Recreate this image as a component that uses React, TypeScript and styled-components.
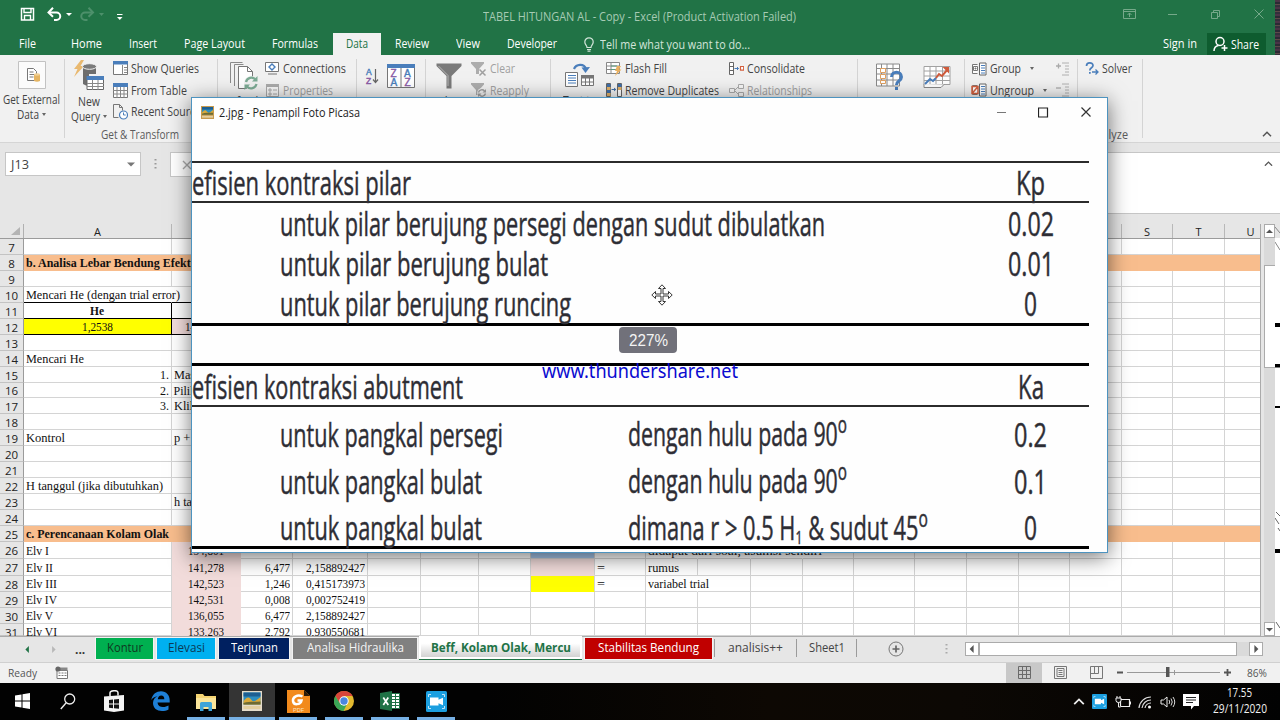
import React, { useLayoutEffect, useRef, useState } from "react";
import styled, { createGlobalStyle } from "styled-components";

const UI = `"Open Sans", "Noto Sans", sans-serif`;
const SERIF = `"Liberation Serif", "Times New Roman", serif`;

const Global = createGlobalStyle`
  html, body { margin: 0; padding: 0; }
  body { width: 1280px; height: 720px; overflow: hidden; background: #000; font-family: ${UI}; font-size: 12px; color: #444; }
  * { box-sizing: border-box; }
  svg { display: block; flex: none; }
`;

/* ---------- text squeezed to a column width ---------- */
const FitBox = styled.span<{ $w: number }>`
  display: inline-block;
  flex: none;
  width: ${(p) => p.$w}px;
  white-space: nowrap;
  text-align: left;
`;
const FitInner = styled.span`
  display: inline-block;
  white-space: nowrap;
  transform-origin: 0 50%;
`;
function Fit({ w, children }: { w: number; children: React.ReactNode }) {
  const ref = useRef<HTMLSpanElement>(null);
  const [k, setK] = useState(1);
  useLayoutEffect(() => {
    if (ref.current) {
      const natural = parseFloat(getComputedStyle(ref.current).width);
      if (natural > 0) setK(w / natural);
    }
  }, [w]);
  return (
    <FitBox $w={w}>
      <FitInner ref={ref} style={{ transform: `scaleX(${k})` }}>{children}</FitInner>
    </FitBox>
  );
}

/* ---------- shell ---------- */
const Desktop = styled.div`
  position: relative;
  width: 1280px;
  height: 720px;
  overflow: hidden;
  display: flex;
  flex-direction: column;
  background: #e6e6e6;
`;
const Head = styled.header`
  display: flex;
  height: 55px;
  flex: none;
`;
const Green = styled.div`
  width: 1275px;
  background: #217346;
  display: flex;
  flex-direction: column;
`;
const EdgeNoise = styled.div`
  width: 5px;
  background: repeating-linear-gradient(180deg, #4a3446 0 2px, #2b2a35 2px 4px, #5d4a48 4px 5px, #33303c 5px 7px);
`;
const TitleBar = styled.div`
  display: flex;
  align-items: center;
  height: 33px;
`;
const QuickAccess = styled.div`
  display: flex;
  align-items: center;
  width: 483px;
  height: 33px;
  padding: 0 0 5px 20px;
`;
const DocTitle = styled.div`
  color: #a6cbb4;
  font-size: 12px;
`;
const Controls = styled.div`
  margin-left: auto;
  padding: 0 9px 5px 0;
  height: 33px;
  display: flex;
  align-items: center;
`;
const TabStrip = styled.nav`
  display: flex;
  height: 22px;
  align-items: center;
  color: #fff;
`;
const RTab = styled.span<{ $ml: number }>`
  margin-left: ${(p) => p.$ml}px;
  line-height: 22px;
  display: flex;
`;
const ActiveTab = styled.span`
  margin-left: 15px;
  width: 48px;
  height: 22px;
  line-height: 22px;
  display: flex;
  justify-content: center;
  background: #f1f1f1;
  color: #217346;
`;
const TellMe = styled.span`
  margin-left: 27px;
  display: flex;
  gap: 6px;
  align-items: center;
  color: #d3e5da;
`;
const Share = styled.span`
  margin-left: 10px;
  width: 59px;
  height: 22px;
  background: #0e5c2f;
  display: flex;
  align-items: center;
  padding-left: 6px;
  gap: 3px;
`;

/* ---------- ribbon ---------- */
const Ribbon = styled.section`
  flex: none;
  height: 88px;
  background: #f1f1f1;
  border-bottom: 1px solid #d5d5d5;
  display: flex;
`;
const Group = styled.div<{ $w: number }>`
  width: ${(p) => p.$w}px;
  flex: none;
  display: flex;
  flex-direction: column;
`;
const GroupBody = styled.div<{ $pl: number }>`
  height: 72px;
  padding-left: ${(p) => p.$pl}px;
  display: flex;
`;
const GroupLabel = styled.div<{ $pl?: number }>`
  height: 14px;
  line-height: 15px;
  color: #5c5c5c;
  padding-left: ${(p) => p.$pl ?? 0}px;
`;
const Sep = styled.div`
  width: 1px;
  height: 79px;
  margin-top: 4px;
  flex: none;
  background: #d4d4d4;
`;
const BigButton = styled.div<{ $w: number; $ml?: number }>`
  width: ${(p) => p.$w}px;
  margin-left: ${(p) => p.$ml ?? 0}px;
  flex: none;
  display: flex;
  flex-direction: column;
  align-items: center;
  padding-top: 3px;
`;
const IconSlot = styled.div<{ $h?: number }>`
  height: ${(p) => p.$h ?? 36}px;
  display: flex;
  align-items: center;
  justify-content: center;
`;
const BigLine = styled.div`
  height: 15px;
  line-height: 15px;
  display: flex;
  align-items: center;
  gap: 3px;
`;
const BtnColumn = styled.div<{ $ml: number }>`
  margin-left: ${(p) => p.$ml}px;
  flex: none;
  padding-top: 3px;
  display: flex;
  flex-direction: column;
`;
const SmallButton = styled.div<{ $dim?: boolean }>`
  height: 21.6px;
  line-height: 21px;
  display: flex;
  align-items: center;
  gap: 3px;
  color: ${(p) => (p.$dim ? "#a0a0a0" : "#444")};
`;
const ArrowGap = styled.span<{ $w: number }>`
  width: ${(p) => p.$w}px;
`;
const Caret = styled.span`
  width: 0;
  height: 0;
  border: 2.5px solid transparent;
  border-top: 3px solid #666;
  border-bottom: 0;
`;
const RibbonEnd = styled.div`
  margin-left: auto;
  padding: 76px 8px 0 0;
`;

/* ---------- formula bar ---------- */
const FormulaBar = styled.section`
  flex: none;
  height: 81px;
  padding-top: 9px;
  display: flex;
`;
const NameBox = styled.div`
  margin-left: 5px;
  width: 136px;
  height: 24px;
  background: #fff;
  border: 1px solid #c6c6c6;
  display: flex;
  align-items: center;
  justify-content: space-between;
  padding: 0 5px 0 5px;
`;
const Dots = styled.div`
  width: 29px;
  height: 24px;
  display: flex;
  align-items: center;
  justify-content: center;
`;
const FxButtons = styled.div`
  width: 80px;
  height: 25px;
  background: #fff;
  border: 1px solid #c6c6c6;
  display: flex;
  align-items: center;
  padding-left: 11px;
`;
const FormulaInput = styled.div`
  flex: 1;
  margin-left: 8px;
  height: 62px;
  background: #fff;
  border: 1px solid #c6c6c6;
  border-right: 0;
  display: flex;
  justify-content: flex-end;
  padding: 8px 7px 0 0;
`;

/* ---------- sheet ---------- */
const SheetArea = styled.section`
  flex: none;
  height: 412px;
  display: flex;
`;
const Grid = styled.div`
  width: 1261px;
  height: 412px;
  overflow: hidden;
  border-right: 1px solid #ababab;
  background: #fff;
`;
const HeadRow = styled.div`
  display: flex;
  height: 15px;
  background: #e6e6e6;
  border-bottom: 1px solid #9b9b9b;
`;
const Corner = styled.div`
  width: 24px;
  display: flex;
  align-items: flex-end;
  justify-content: flex-end;
  padding: 0 3px 3px 0;
  border-right: 1px solid #b0b0b0;
  flex: none;
`;
const ColHead = styled.div<{ $w: number }>`
  width: ${(p) => p.$w}px;
  flex: none;
  border-right: 1px solid #b8b8b8;
  line-height: 15px;
  text-align: center;
  font-size: 11px;
  color: #222;
`;
const GridRow = styled.div<{ $h: number }>`
  display: flex;
  height: ${(p) => p.$h}px;
`;
const RowHead = styled.div<{ $h: number }>`
  width: 24px;
  flex: none;
  background: #e6e6e6;
  border-right: 1px solid #9b9b9b;
  border-bottom: 1px solid #c3c3c3;
  line-height: ${(p) => p.$h + 1}px;
  text-align: center;
  font-size: 11.5px;
  color: #222;
`;
const CellBox = styled.div<{ $w: number; $h: number; $bg?: string; $b?: string; $r?: string; $al?: string; $bold?: boolean }>`
  width: ${(p) => p.$w}px;
  flex: none;
  background: ${(p) => p.$bg ?? "transparent"};
  border-right: 1px solid ${(p) => p.$r ?? "#d4d4d4"};
  border-bottom: 1px solid ${(p) => p.$b ?? "#d4d4d4"};
  display: flex;
  justify-content: ${(p) => p.$al ?? "flex-start"};
  padding: 0 2px 0 1.5px;
  font-family: ${SERIF};
  font-size: 12px;
  font-weight: ${(p) => (p.$bold ? 700 : 400)};
  line-height: ${(p) => p.$h + 1}px;
  color: #111;
`;
const VScroll = styled.div`
  width: 14px;
  display: flex;
  flex-direction: column;
  background: #dadada;
  border-left: 3px solid #e6e6e6;
`;
const ScrollBtn = styled.div<{ $w: number; $h: number }>`
  width: ${(p) => p.$w}px;
  height: ${(p) => p.$h}px;
  flex: none;
  background: #fff;
  border: 1px solid #ababab;
  display: flex;
  align-items: center;
  justify-content: center;
`;
const VThumb = styled.div`
  margin-top: 27px;
  height: 103px;
  background: #fff;
  border: 1px solid #ababab;
  border-right: 0;
`;
const Push = styled.div`
  flex: 1;
`;
const EdgeStrip = styled.div`
  width: 5px;
  background: #fff;
`;

/* ---------- sheet tabs ---------- */
const SheetTabs = styled.section`
  flex: none;
  height: 26px;
  border-top: 1px solid #ababab;
  background: #e6e6e6;
  display: flex;
`;
const NavBox = styled.div`
  width: 96px;
  height: 24px;
  display: flex;
  align-items: center;
  padding-left: 24px;
`;
const NavDots = styled.span`
  margin-left: 18px;
  color: #333;
  font-weight: 700;
`;
const STab = styled.div<{ $w: number; $bg?: string; $c?: string; $mr: number }>`
  width: ${(p) => p.$w}px;
  height: 21px;
  line-height: 19px;
  margin: 1px ${(p) => p.$mr}px 0 0;
  background: ${(p) => p.$bg ?? "transparent"};
  color: ${(p) => p.$c ?? "#444"};
  display: flex;
  justify-content: center;
  flex: none;
  outline: ${(p) => (p.$bg ? "1px solid #f3f3f3" : "none")};
`;
const ActiveSheet = styled.div`
  width: 163px;
  height: 23px;
  line-height: 24px;
  margin: -1px 3px 0 0;
  flex: none;
  background: linear-gradient(#fff 0 35%, #d2d2d2);
  border: 2px solid #fff;
  border-top: 0;
  box-shadow: 0 1px 0 #217346;
  color: #217346;
  font-weight: 700;
  display: flex;
  justify-content: center;
`;
const TabRule = styled.div`
  width: 1px;
  height: 18px;
  margin-top: 2px;
  background: #9b9b9b;
  flex: none;
`;
const TabSlot = styled.div<{ $w: number }>`
  width: ${(p) => p.$w}px;
  height: 23px;
  flex: none;
  display: flex;
  align-items: center;
  justify-content: center;
`;
const HScroll = styled.div`
  margin: 5px 0 0 6px;
  width: 298px;
  height: 14px;
  display: flex;
  background: #dadada;
`;
const HThumb = styled.div`
  width: 258px;
  background: #fff;
  border: 1px solid #ababab;
  margin-right: 12px;
`;

/* ---------- status bar ---------- */
const Status = styled.section`
  flex: none;
  height: 21px;
  background: #f1f1f1;
  border-top: 1px solid #d0d0d0;
  display: flex;
  align-items: center;
  padding: 0 1px 2px 8px;
  font-size: 11px;
  color: #555;
`;
const StatusIcon = styled.div`
  margin-left: 18px;
`;
const ViewBtn = styled.div<{ $on?: boolean; $ml?: string }>`
  margin-left: ${(p) => p.$ml ?? "0"};
  width: 36px;
  height: 20px;
  margin-bottom: -2px;
  padding-bottom: 1px;
  display: flex;
  align-items: center;
  justify-content: center;
  background: ${(p) => (p.$on ? "#c8c8c8" : "transparent")};
`;
const ZoomCtl = styled.div`
  display: flex;
  align-items: center;
  width: 165px;
  padding-left: 2px;
  gap: 15px;
`;

/* ---------- taskbar ---------- */
const Taskbar = styled.footer`
  flex: none;
  height: 37px;
  background: linear-gradient(90deg, #020202 0 38%, #0d0803 60%, #0c0804 75%, #020202);
  display: flex;
`;
const TaskList = styled.div`
  display: flex;
  margin-left: -1px;
`;
const TaskItem = styled.div<{ $active?: boolean; $open?: boolean }>`
  width: ${(p) => (p.$active ? 46 : 38)}px;
  margin: 0 ${(p) => (p.$active ? 0 : 4)}px;
  height: 37px;
  padding-top: 2px;
  display: flex;
  align-items: center;
  justify-content: center;
  background: ${(p) => (p.$active ? "#343434" : "transparent")};
  border-bottom: 3px solid ${(p) => (p.$open || p.$active ? "#76b0e4" : "transparent")};
`;
const Tray = styled.div`
  margin-left: auto;
  display: flex;
  align-items: center;
  gap: 7.5px;
`;
const Clock = styled.div`
  width: 81px;
  margin-left: -7.5px;
  color: #f2f2f2;
  font-size: 12px;
  line-height: 16px;
  display: flex;
  flex-direction: column;
  align-items: center;
  padding-bottom: 2px;
`;

/* ---------- photo viewer window ---------- */
const Viewer = styled.div`
  position: absolute;
  left: 191px;
  top: 97px;
  width: 917px;
  height: 456px;
  background: #fefefe;
  border: 1px solid #4d93bf;
  box-shadow: 0 4px 20px rgba(0, 0, 0, 0.55);
  display: flex;
  flex-direction: column;
  overflow: hidden;
`;
const ViewerBar = styled.div`
  height: 29px;
  flex: none;
  display: flex;
  align-items: center;
  padding: 0 15px 1px 9px;
  gap: 5px;
  color: #222;
`;
const ViewerControls = styled.div`
  margin-left: auto;
  display: flex;
  align-items: center;
  gap: 31px;
`;
const Doc = styled.div`
  width: 897px;
  padding-top: 34px;
  font-size: 32px;
  color: #2c2c33;
  -webkit-text-stroke: 0.5px #3a3a42;
  display: flex;
  flex-direction: column;
`;
const Rule = styled.div<{ $h: number }>`
  height: ${(p) => p.$h}px;
  flex: none;
  background: ${(p) => (p.$h > 2 ? "#000" : "#2b2b2b")};
`;
const DocRow = styled.div<{ $h: number }>`
  height: ${(p) => p.$h}px;
  line-height: ${(p) => p.$h + 2.5}px;
  flex: none;
  display: grid;
  grid-template-columns: 88px 348px 344px 117px;
`;
const DocHead = styled.div`
  grid-column: 1 / 4;
`;
const DocCell = styled.div<{ $col: string; $up?: boolean }>`
  grid-column: ${(p) => p.$col};
  margin-top: ${(p) => (p.$up ? -1 : 0)}px;
`;
const DocValue = styled.div`
  grid-column: 4;
  text-align: center;
`;
const DocBlock = styled.div<{ $h: number; $pt?: number }>`
  height: ${(p) => p.$h}px;
  padding-top: ${(p) => p.$pt ?? 0}px;
  flex: none;
`;
const Sup = styled.span`
  display: inline-block;
  font-size: 23px;
  line-height: 20px;
  transform: translateY(-13px);
`;
const Sub = styled.span`
  display: inline-block;
  font-size: 18px;
  line-height: 20px;
  transform: translateY(4px);
`;
const ZoomBadge = styled.div`
  position: absolute;
  left: 619px;
  top: 327px;
  width: 58px;
  height: 26px;
  border-radius: 4px;
  background: #71717a;
  color: #f4f4f4;
  font: 16px/27px "Liberation Sans", Arial, sans-serif;
  text-align: center;
`;
const Watermark = styled.div`
  position: absolute;
  left: 542px;
  top: 358px;
  font: 19px/26px "Noto Sans", "Open Sans", sans-serif;
  color: #0a0ad0;
`;
const Pointer = styled.div`
  position: absolute;
  left: 651px;
  top: 284px;
`;

/* ---------- small drawings ---------- */
const Tri = ({ d, c = "#555", s = 6 }: { d: "u" | "d" | "l" | "r"; c?: string; s?: number }) => {
  const p = { u: "0,7 10,7 5,2", d: "0,3 10,3 5,8", l: "7,0 7,10 2,5", r: "3,0 3,10 8,5" }[d];
  return <svg width={s} height={s} viewBox="0 0 10 10"><polygon points={p} fill={c} /></svg>;
};
const ChevronUp = ({ c = "#555", w = 10 }: { c?: string; w?: number }) => (
  <svg width={w} height={w * 0.6} viewBox="0 0 10 6"><path d="M1 5.2 5 1.2l4 4" fill="none" stroke={c} strokeWidth="1.5" /></svg>
);
const TableIcon = () => (
  <svg width="15" height="15" viewBox="0 0 15 15">
    <path d="M.5.5h14v14H.5z" fill="#fff" stroke="#777" />
    <path d="M0 0h15v4H0z" fill="#4a7ebb" />
    <path d="M0 7.5h15M0 11h15M4 4v11M7.5 4v11M11 4v11" stroke="#888" />
  </svg>
);
const PaneIcon = () => (
  <svg width="15" height="15" viewBox="0 0 15 15">
    <path d="M.5.5h14v13H.5z" fill="#fff" stroke="#777" />
    <path d="M0 0h15v3.5H0z" fill="#4a7ebb" />
    <path d="M9.5 4v9.5M11 6.5h3M11 9h3M11 11.500h3" stroke="#888" />
  </svg>
);
const RecentIcon = () => (
  <svg width="15" height="16" viewBox="0 0 15 16">
    <path d="M.5 13.500V.5h6l3 3v3M.5 13.500h5" fill="none" stroke="#777" />
    <path d="M6.500.5v3h3" fill="none" stroke="#777" />
    <circle cx="10.500" cy="11" r="4" fill="#fff" stroke="#4a7ebb" strokeWidth="1.200" />
    <path d="M10.500 8.500V11h2.200" fill="none" stroke="#4a7ebb" />
  </svg>
);
const ExternalIcon = () => (
  <svg width="28" height="28" viewBox="0 0 28 28">
    <path d="M.5.5h27v27H.5z" fill="#fbfbfb" stroke="#c2c2c2" />
    <path d="M9.500 7.500h6l3 3v9h-9z" fill="#fff" stroke="#777" />
    <path d="M11.500 11h4M11.500 13.500h5M11.500 16h4" stroke="#777" />
    <path d="M16 13.500h6v6.500q-3 1.600-6 0z" fill="#e5b461" />
    <ellipse cx="19" cy="13.500" rx="3" ry="1.300" fill="#f1cf92" />
  </svg>
);
const NewQueryIcon = () => (
  <svg width="33" height="32" viewBox="0 0 33 32">
    <path d="M8 0h3L7.500 6H11L1 17l3.500-8H1z" fill="#e9b970" />
    <path d="M10 7v17q3 2 6 2V14h7V7z" fill="#6d6d6d" />
    <ellipse cx="16.500" cy="6.500" rx="7" ry="2.800" fill="#7b7b7b" stroke="#f1f1f1" />
    <path d="M14 16.500h16.500v13H14z" fill="#fff" stroke="#666" />
    <path d="M13.500 16h17.500v4H13.500z" fill="#4a7ebb" />
    <path d="M14 23.500h17M14 26.500h17M19.500 20v10M25 20v10" stroke="#888" />
  </svg>
);
const RefreshIcon = () => (
  <svg width="29" height="31" viewBox="0 0 29 31">
    <path d="M1.500 22V1.500h12M5.500 25V3.500h9" fill="none" stroke="#8a8a8a" />
    <path d="M9.500 27.500v-22h9l5 5v17z" fill="#fff" stroke="#777" />
    <path d="M18.500 5.500v5h5" fill="none" stroke="#777" />
    <circle cx="22" cy="22" r="7" fill="#f1f1f1" />
    <path d="M17 21a5.500 5.500 0 0 1 9.500-2.500M27.500 23a5.500 5.500 0 0 1-9.500 2.500" fill="none" stroke="#7cab94" strokeWidth="2.300" />
    <path d="M28.500 15v5.500H23zM15.500 29v-5.500H21z" fill="#7cab94" />
  </svg>
);
const ConnIcon = () => (
  <svg width="15" height="13" viewBox="0 0 15 13">
    <path d="M.5.5h13v9H.5z" fill="#fff" stroke="#777" />
    <path d="M7 2 10 5 7 8 4 5z" fill="none" stroke="#4a7ebb" strokeWidth="1.400" />
    <path d="M3 12h9" stroke="#777" />
  </svg>
);
const PropIcon = () => (
  <svg width="15" height="15" viewBox="0 0 15 15">
    <path d="M1.500 1.500h12v12h-12z" fill="#f6f6f6" stroke="#aaa" />
    <path d="M1 1h13v3H1z" fill="#aaa" />
    <path d="M4 6h2v2H4zM4 10h2v2H4z" fill="none" stroke="#aaa" />
    <path d="M8 7h4M8 11h4" stroke="#aaa" />
  </svg>
);
const SvgLetter = styled.text`
  font-family: "Liberation Sans", Arial, sans-serif;
  font-weight: 400;
  stroke-width: 0.4px;
`;
const SortAz = () => (
  <svg width="14" height="18" viewBox="0 0 14 18">
    <SvgLetter x="1" y="8" fontSize="8.500" fill="#4a7ebb" stroke="#4a7ebb">A</SvgLetter>
    <SvgLetter x="1" y="16.500" fontSize="8.500" fill="#8a5aa5" stroke="#8a5aa5">Z</SvgLetter>
    <path d="M10.500 2v13M8 12.500l2.500 3 2.500-3" fill="none" stroke="#666" strokeWidth="1.200" />
  </svg>
);
const SortBig = () => (
  <svg width="28" height="24" viewBox="0 0 28 24">
    <path d="M.5.5h27v23H.5z" fill="#fff" stroke="#777" />
    <path d="M0 0h28v4H0z" fill="#4a7ebb" />
    <path d="M14 4v20" stroke="#777" />
    <SvgLetter x="3.500" y="13" fontSize="10" fill="#8a5aa5" stroke="#8a5aa5">Z</SvgLetter>
    <SvgLetter x="3.500" y="22.300" fontSize="10" fill="#4a7ebb" stroke="#4a7ebb">A</SvgLetter>
    <SvgLetter x="17" y="13" fontSize="10" fill="#4a7ebb" stroke="#4a7ebb">A</SvgLetter>
    <SvgLetter x="17.500" y="22.300" fontSize="10" fill="#8a5aa5" stroke="#8a5aa5">Z</SvgLetter>
  </svg>
);
const FilterBig = () => (
  <svg width="26" height="26" viewBox="0 0 26 26">
    <path d="M.5.500h25v2.500l-10 10v12.500h-5V13L.5 3z" fill="#7a7a7a" />
    <path d="M2.500 3 12 12.500V23" fill="none" stroke="#b5b5b5" />
  </svg>
);
const FilterSmall = ({ kind }: { kind: "x" | "r" }) => (
  <svg width="16" height="16" viewBox="0 0 16 16">
    <path d="M0 1h13v1.500L8 8v5H5V8L0 2.500z" fill="#adadad" />
    {kind === "x" ? (
      <path d="M8.500 8.500 14.500 14.500M14.500 8.500 8.500 14.500" stroke="#a0a0a0" strokeWidth="1.500" />
    ) : (
      <g>
        <circle cx="11" cy="11" r="4.800" fill="#f1f1f1" />
        <path d="M7.500 10.500a3.500 3.500 0 0 1 6-1.500M14.500 11.500a3.500 3.500 0 0 1-6 1.500" fill="none" stroke="#a0a0a0" strokeWidth="1.400" />
        <path d="M15 7v3.500h-3.500zM7 15v-3.500h3.500z" fill="#a0a0a0" />
      </g>
    )}
  </svg>
);
const TextColsIcon = () => (
  <svg width="30" height="25" viewBox="0 0 30 25">
    <path d="M1.500 9.500h12v14h-12z" fill="#fff" stroke="#777" />
    <path d="M4 12.500h8M4 15h8M4 17.500h8M4 20h8" stroke="#4a7ebb" />
    <path d="M10 6C12 1 20 0 22 6" fill="none" stroke="#4a7ebb" strokeWidth="2.200" />
    <path d="M17.500 4.500 26 4l-4.500 6z" fill="#4a7ebb" />
    <path d="M17.500 12.500h12v10h-12z" fill="#fff" stroke="#777" />
    <path d="M17 12h13v3.500H17z" fill="#777" />
    <path d="M21.500 15v8M25.500 15v8M17 19h13" stroke="#777" />
  </svg>
);
const FlashIcon = () => (
  <svg width="16" height="15" viewBox="0 0 16 15">
    <path d="M.5 1.500h13v11H.5zM.5 5h13M.5 8.500h13M5 1.500v11" fill="#fff" stroke="#888" />
    <path d="M5 5h6M5 8.500h4" stroke="#5b9b7c" />
    <path d="M11 5h4l-2 3.500h2.500L9 15l2-5H9z" fill="#e9b060" />
  </svg>
);
const DupIcon = () => (
  <svg width="16" height="15" viewBox="0 0 16 15">
    <path d="M.5.5h4v13h-4zM11.500.500h4v13h-4z" fill="#fff" stroke="#666" />
    <path d="M1 1h3.500v3H1zM1 7h3.500v3H1zM12 1h3.500v3H12z" fill="#3f6ea8" />
    <path d="M1 4h3.500v3H1zM1 10h3.500v3H1zM12 4h3.500v3H12z" fill="#e3b268" />
    <path d="M5.500 6.500h4M8 5l1.800 1.500L8 8" fill="none" stroke="#3f6ea8" />
  </svg>
);
const ConsIcon = () => (
  <svg width="15" height="13" viewBox="0 0 15 13">
    <path d="M.5.500h4v12h-4zM.5 4.500h4M.5 8.500h4" fill="#fff" stroke="#666" />
    <path d="M5.500 6.500h4M8 5l1.500 1.500L8 8" fill="none" stroke="#4a7ebb" />
    <path d="M11.500 4.500h3.200v3.600h-3.200z" fill="#fff" stroke="#d3603f" strokeWidth="1.200" />
  </svg>
);
const RelIcon = () => (
  <svg width="15" height="15" viewBox="0 0 15 15">
    <path d="M.5 5.500h5v4h-5zM9.500 1.500h5v4h-5zM9.500 9.500h5v4h-5zM5.500 7.500 9.500 3.500M5.500 7.500l4 4" fill="#f6f6f6" stroke="#aaa" />
  </svg>
);
const WhatIfIcon = () => (
  <svg width="28" height="28" viewBox="0 0 28 28">
    <path d="M.5 1h23v22H.5zM.5 5.500h23M.5 11h23M.5 17h23M5.500 1v22M11 1v22M17 1v22" fill="#fff" stroke="#8a8a8a" />
    <path d="M4.500 5.500h5v4h-5zM4.500 11.500h5v4h-5zM4.500 17.500h5v3h-5z" fill="#fff" stroke="#e0a060" />
    <path d="M15.500 14c0-6.500 10-6.500 10 0 0 4-5 3.500-5 8" fill="none" stroke="#4a7ebb" strokeWidth="3" />
    <path d="M19 24h3v3h-3z" fill="#4a7ebb" />
  </svg>
);
const ForecastIcon = () => (
  <svg width="28" height="26" viewBox="0 0 28 26">
    <path d="M1 2.500h26v18H1zM1 7h26M1 12h26M1 16.500h26M7 2.500v18M13 2.500v18M19.500 2.500v18" fill="#fff" stroke="#a2a2a2" />
    <path d="M1 20v3.500h17l3-3" fill="#fff" stroke="#888" />
    <path d="M2 20l5-5 3 2 3-3" fill="none" stroke="#4a7ebb" strokeWidth="2" />
    <path d="m13 14 3-4 3 2 6-7" fill="none" stroke="#cf5b3c" strokeWidth="2" />
    <path d="M19.500 3h6.500v6.500z" fill="#cf5b3c" />
  </svg>
);
const GroupIcon = ({ red }: { red?: boolean }) => (
  <svg width="16" height="14" viewBox="0 0 16 14">
    <path d="M8.500 1h6.500v12H8.500z" fill="#fff" stroke="#666" />
    <path d="M10 3.500h4M10 6h4M10 8.500h4M10 11h4" stroke="#4a7ebb" />
    <path d="M6.500 2.500h-5v9h5" fill="#fff" stroke="#777" />
    {red ? (
      <path d="M1 3.500h6v7H1zM1 10.500l6-7" fill="none" stroke="#d3603f" strokeWidth="1.500" />
    ) : (
      <path d="M2.500 4.500h4v4h-4zM4.500 5.500v2M3.500 6.500h2" fill="none" stroke="#777" />
    )}
  </svg>
);
const DetailIcon = ({ minus }: { minus?: boolean }) => (
  <svg width="14" height="14" viewBox="0 0 14 14">
    <path d={minus ? "M0 5h5" : "M0 4h5M2.500 1.500v5"} stroke="#aaa" strokeWidth="1.300" />
    <path d="M6 1h7M9 4h4M9 7h4M9 10h4M6 13h7" stroke="#b0b0b0" />
  </svg>
);
const SolverIcon = () => (
  <svg width="14" height="14" viewBox="0 0 14 14">
    <path d="M1.500 4C1.500 0 8 0 8 3.500 8 6 4.800 5.500 4.800 8.500" fill="none" stroke="#4a7ebb" strokeWidth="1.700" />
    <path d="M4 10h1.700v1.700H4z" fill="#4a7ebb" />
    <path d="M7 10h6M10.500 7.500l2.500 2.500-2.500 2.500" fill="none" stroke="#4a7ebb" strokeWidth="1.300" />
  </svg>
);
const QatIcons = () => (
  <svg width="105" height="20" viewBox="0 0 105 20">
    <path d="M1.500 4.500h12v11.500h-12z" fill="none" stroke="#fff" strokeWidth="1.500" />
    <path d="M4 4.500v4h7v-4M4.500 16v-4.500h6V16" fill="none" stroke="#fff" strokeWidth="1.400" />
    <path d="M29 8.500h7.500a3.700 3.700 0 0 1 0 7.500H34" fill="none" stroke="#fff" strokeWidth="2" />
    <path d="M33 3.800 28.500 8.500l4.500 4.300" fill="none" stroke="#fff" strokeWidth="2" />
    <path d="M46 9h6l-3 3z" fill="#fff" />
    <path d="M72.500 8.500H65a3.700 3.700 0 0 0 0 7.500h2.500" fill="none" stroke="#4d906b" strokeWidth="2" />
    <path d="M68.500 3.800 73 8.500l-4.500 4.300" fill="none" stroke="#4d906b" strokeWidth="2" />
    <path d="M79 9h5l-2.500 3z" fill="#4d906b" />
    <path d="M97 10.500h5.500" stroke="#fff" />
    <path d="M97 13h5.500l-2.700 3z" fill="#fff" />
  </svg>
);
const ExcelControls = () => (
  <svg width="144" height="14" viewBox="0 0 144 14">
    <g fill="none" stroke="#76a98a">
      <path d="M1.500 2.500h12v9h-12zM1.500 4.500h12M7.500 10V6M5.500 8l2-2 2 2" />
      <path d="M46 7.500h9" />
      <path d="M89.500 5.500h6v6h-6zM91.500 5.500v-2h6v6h-2" />
      <path d="M132.500 2.500l9 9M141.500 2.500l-9 9" />
    </g>
  </svg>
);
const PhotoIcon = ({ s }: { s: number }) => (
  <svg width={s} height={s} viewBox="0 0 20 20">
    <path d="M0 0h20v20H0z" fill={s > 15 ? "#e5dccb" : "#c79a4e"} />
    <path d="M1.500 1.500h17v12h-17z" fill="#2d8ec0" />
    <path d="M1.500 1.500h17v4h-17z" fill="#1d5f92" />
    <path d="M1.500 10c4-5 6-4 8-1s5 0 9-3v7.500h-17z" fill="#d9a93a" />
    <path d="M1.500 12c5-2 10-1 17-1.500v3h-17z" fill="#6d6a33" />
    <path d="M1.500 15h17v3h-17z" fill="#e3cfa0" />
  </svg>
);
const CamIcon = ({ s }: { s: number }) => (
  <svg width={s} height={s} viewBox="0 0 21 21">
    <rect width="21" height="21" rx="1.500" fill="#1b9fe0" />
    <path d="M2.500 6V3.500H5M16 3.500h2.500V6M2.500 15v2.500H5M16 17.500h2.500V15" fill="none" stroke="#bfe5f8" />
    <path d="M4 6.500h8.500v2.300l4.500-2v7.500l-4.500-2v2.200H4z" fill="#fff" />
  </svg>
);

/* ---------- data ---------- */
const COLS = [148, 69, 52, 75, 53, 58, 52, 64, 51, 52, 53, 52, 51, 61, 52, 52, 51, 52, 51, 52, 52];
const NAMES = "ABCDEFGHIJKLMNOPQRSTU".split("");
const HEIGHTS = [16, 16, 16, 16, 16, 16, 16, 16, 16, 15, 16, 16, 16, 16, 16, 16, 16, 16, 16, 17, 17, 16, 16, 16, 12];

type Cell = { t?: string; w?: number; al?: string; bg?: string; bold?: boolean; b?: string; r?: string };
const PINK = "#f2dcdb";
const num = (t: string, w: number): Cell => ({ t, w, al: "flex-end" });
const pink = (t: string, w = 36): Cell => ({ t, w, al: "center", bg: PINK, b: PINK, r: PINK });
const CELLS: Record<string, Cell> = {
  "8A": { t: "b. Analisa Lebar Bendung Efektif", w: 172, bold: true },
  "10A": { t: "Mencari He (dengan trial error)", w: 154, b: "#000", r: "#fff" },
  "10B": { b: "#000" },
  "11A": { t: "He", w: 14, al: "center", bold: true, b: "#000", r: "#000" },
  "11B": { b: "#000" },
  "12A": { t: "1,2538", w: 31, al: "center", bg: "#ffff00", b: "#000", r: "#000" },
  "12B": { t: "142,5308", w: 42, al: "center", bg: PINK, b: "#000" },
  "14A": { t: "Mencari He", w: 58 },
  "15A": num("1.", 9), "15B": { t: "Masukkan nilai", w: 76 },
  "16A": num("2.", 9), "16B": { t: "Pilih menu Data", w: 78 },
  "17A": num("3.", 9), "17B": { t: "Klik Goal Seek", w: 76 },
  "19A": { t: "Kontrol", w: 39 }, "19B": { t: "p + He", w: 34 },
  "22A": { t: "H tanggul (jika dibutuhkan)", w: 137 },
  "23B": { t: "h tanggul", w: 46 },
  "25A": { t: "c. Perencanaan Kolam Olak", w: 143, bold: true },
  "26A": { t: "Elv I", w: 23 }, "26B": pink("134,801"),
  "27A": { t: "Elv II", w: 27 }, "27B": pink("141,278"), "27C": num("6,477", 25), "27D": num("2,158892427", 59),
  "28A": { t: "Elv III", w: 31 }, "28B": pink("142,523"), "28C": num("1,246", 25), "28D": num("0,415173973", 59),
  "29A": { t: "Elv IV", w: 31 }, "29B": pink("142,531"), "29C": num("0,008", 25), "29D": num("0,002752419", 59),
  "30A": { t: "Elv V", w: 27 }, "30B": pink("136,055"), "30C": num("6,477", 25), "30D": num("2,158892427", 59),
  "31A": { t: "Elv VI", w: 31 }, "31B": pink("133,263"), "31C": num("2,792", 25), "31D": num("0,930550681", 59),
  "26H": { bg: "#a5c4e8" }, "26J": { t: "didapat dari soal, asumsi sendiri", w: 174, r: "#fff" }, "26K": { r: "#fff" }, "26L": { r: "#fff" },
  "27H": { bg: PINK, b: PINK }, "27I": { t: "=", w: 8 }, "27J": { t: "rumus", w: 31 },
  "28H": { bg: "#ffff00", b: "#ffff00" }, "28I": { t: "=", w: 8 }, "28J": { t: "variabel trial", w: 61, r: "#fff" },
};

function SheetRow({ n, h }: { n: number; h: number }) {
  const fill = n === 8 || n === 25 ? "#f8bd8d" : undefined;
  const lineH = h < 15 ? 16 : h;
  return (
    <GridRow $h={h}>
      <RowHead $h={lineH}>{n}</RowHead>
      {COLS.map((w, i) => {
        const c = CELLS[`${n}${NAMES[i]}`] ?? {};
        return (
          <CellBox key={i} $w={w} $h={lineH} $al={c.al} $bold={c.bold} $bg={fill ?? c.bg} $b={fill ?? c.b} $r={fill ?? c.r}>
            {c.t && <Fit w={c.w!}>{c.t}</Fit>}
          </CellBox>
        );
      })}
    </GridRow>
  );
}

const T = ({ t, w }: { t: string; w: number }) => <Fit w={w}>{t}</Fit>;

export default function App() {
  return (
    <>
      <Global />
      <Desktop>
        <Head>
          <Green>
            <TitleBar>
              <QuickAccess><QatIcons /></QuickAccess>
              <DocTitle><T t="TABEL HITUNGAN AL - Copy - Excel (Product Activation Failed)" w={313} /></DocTitle>
              <Controls><ExcelControls /></Controls>
            </TitleBar>
            <TabStrip>
              <RTab $ml={19}><T t="File" w={17} /></RTab>
              <RTab $ml={35}><T t="Home" w={31} /></RTab>
              <RTab $ml={27}><T t="Insert" w={28} /></RTab>
              <RTab $ml={27}><T t="Page Layout" w={61} /></RTab>
              <RTab $ml={27}><T t="Formulas" w={46} /></RTab>
              <ActiveTab><T t="Data" w={22} /></ActiveTab>
              <RTab $ml={14}><T t="Review" w={34} /></RTab>
              <RTab $ml={27}><T t="View" w={24} /></RTab>
              <RTab $ml={27}><T t="Developer" w={50} /></RTab>
              <TellMe>
                <svg width="10" height="15" viewBox="0 0 10 15">
                  <path d="M3 10.500c0-2-2.200-2.800-2.200-5.500a4.200 4.200 0 0 1 8.400 0c0 2.700-2.200 3.500-2.200 5.500zM3 12.500h4M3.500 14.200h3" fill="none" stroke="#d3e5da" strokeWidth="1.200" />
                </svg>
                <T t="Tell me what you want to do..." w={150} />
              </TellMe>
              <RTab $ml={413}><T t="Sign in" w={34} /></RTab>
              <Share>
                <svg width="15" height="16" viewBox="0 0 15 16">
                  <circle cx="7" cy="5.500" r="4" fill="none" stroke="#fff" strokeWidth="1.500" />
                  <path d="M1 15c0-3 2-5 4.500-5.500M8.500 12h6M11.500 9v6" fill="none" stroke="#fff" strokeWidth="1.500" />
                </svg>
                <T t="Share" w={28} />
              </Share>
            </TabStrip>
          </Green>
          <EdgeNoise />
        </Head>

        <Ribbon>
          <Group $w={64}>
            <GroupBody $pl={0}>
              <BigButton $w={63}>
                <IconSlot $h={34}><ExternalIcon /></IconSlot>
                <BigLine><T t="Get External" w={57} /></BigLine>
                <BigLine><T t="Data" w={22} /><Caret /></BigLine>
              </BigButton>
            </GroupBody>
          </Group>
          <Sep />
          <Group $w={152}>
            <GroupBody $pl={5}>
              <BigButton $w={38}>
                <IconSlot><NewQueryIcon /></IconSlot>
                <BigLine><T t="New" w={22} /></BigLine>
                <BigLine><T t="Query" w={29} /><Caret /></BigLine>
              </BigButton>
              <BtnColumn $ml={5}>
                <SmallButton><PaneIcon /><T t="Show Queries" w={68} /></SmallButton>
                <SmallButton><TableIcon /><T t="From Table" w={56} /></SmallButton>
                <SmallButton><RecentIcon /><T t="Recent Sources" w={75} /></SmallButton>
              </BtnColumn>
            </GroupBody>
            <GroupLabel $pl={36}><T t="Get & Transform" w={78} /></GroupLabel>
          </Group>
          <Sep />
          <Group $w={138}>
            <GroupBody $pl={6}>
              <BigButton $w={38}>
                <IconSlot><RefreshIcon /></IconSlot>
                <BigLine><T t="Refresh" w={38} /></BigLine>
              </BigButton>
              <BtnColumn $ml={3}>
                <SmallButton><ConnIcon /><T t="Connections" w={63} /></SmallButton>
                <SmallButton $dim><PropIcon /><T t="Properties" w={50} /></SmallButton>
              </BtnColumn>
            </GroupBody>
          </Group>
          <Sep />
          <Group $w={68}>
            <GroupBody $pl={8}>
              <BigButton $w={14}><IconSlot $h={36}><SortAz /></IconSlot></BigButton>
              <BigButton $w={28} $ml={8}>
                <IconSlot><SortBig /></IconSlot>
                <BigLine><T t="Sort" w={21} /></BigLine>
              </BigButton>
            </GroupBody>
          </Group>
          <Sep />
          <Group $w={124}>
            <GroupBody $pl={9}>
              <BigButton $w={28}>
                <IconSlot><FilterBig /></IconSlot>
                <BigLine><T t="Filter" w={27} /></BigLine>
              </BigButton>
              <BtnColumn $ml={8}>
                <SmallButton $dim><FilterSmall kind="x" /><T t="Clear" w={25} /></SmallButton>
                <SmallButton $dim><FilterSmall kind="r" /><T t="Reapply" w={39} /></SmallButton>
              </BtnColumn>
            </GroupBody>
          </Group>
          <Sep />
          <Group $w={306}>
            <GroupBody $pl={12}>
              <BigButton $w={32}>
                <IconSlot $h={35}><TextColsIcon /></IconSlot>
                <BigLine><T t="Text to" w={33} /></BigLine>
              </BigButton>
              <BtnColumn $ml={11}>
                <SmallButton><FlashIcon /><T t="Flash Fill" w={42} /></SmallButton>
                <SmallButton><DupIcon /><T t="Remove Duplicates" w={94} /></SmallButton>
              </BtnColumn>
              <BtnColumn $ml={10}>
                <SmallButton><ConsIcon /><T t="Consolidate" w={58} /></SmallButton>
                <SmallButton $dim><RelIcon /><T t="Relationships" w={65} /></SmallButton>
              </BtnColumn>
            </GroupBody>
          </Group>
          <Sep />
          <Group $w={106}>
            <GroupBody $pl={11}>
              <BigButton $w={42}>
                <IconSlot $h={37}><WhatIfIcon /></IconSlot>
                <BigLine><T t="What-If" w={40} /></BigLine>
              </BigButton>
              <BigButton $w={42} $ml={5}>
                <IconSlot $h={37}><ForecastIcon /></IconSlot>
                <BigLine><T t="Forecast" w={42} /></BigLine>
              </BigButton>
            </GroupBody>
          </Group>
          <Sep />
          <Group $w={112}>
            <GroupBody $pl={6}>
              <BtnColumn $ml={0}>
                <SmallButton><GroupIcon /><T t="Group" w={31} /><ArrowGap $w={3} /><Caret /></SmallButton>
                <SmallButton><GroupIcon red /><T t="Ungroup" w={44} /><ArrowGap $w={3} /><Caret /></SmallButton>
              </BtnColumn>
              <BtnColumn $ml={9}>
                <SmallButton><DetailIcon /></SmallButton>
                <SmallButton><DetailIcon minus /></SmallButton>
              </BtnColumn>
            </GroupBody>
          </Group>
          <Sep />
          <Group $w={64}>
            <GroupBody $pl={7}>
              <BtnColumn $ml={0}>
                <SmallButton><SolverIcon /><T t="Solver" w={30} /></SmallButton>
              </BtnColumn>
            </GroupBody>
            <GroupLabel $pl={11}><T t="Analyze" w={39} /></GroupLabel>
          </Group>
          <Sep />
          <RibbonEnd><ChevronUp /></RibbonEnd>
        </Ribbon>

        <FormulaBar>
          <NameBox><T t="J13" w={18} /><Tri d="d" c="#777" s={8} /></NameBox>
          <Dots>
            <svg width="3" height="12" viewBox="0 0 3 12"><path d="M.5 1h2v1.500h-2zM.5 5h2v1.500h-2zM.5 9h2v1.500h-2z" fill="#999" /></svg>
          </Dots>
          <FxButtons>
            <svg width="10" height="10" viewBox="0 0 10 10"><path d="M1 1l8 8M9 1 1 9" stroke="#aaa" strokeWidth="1.400" /></svg>
          </FxButtons>
          <FormulaInput><ChevronUp w={9} /></FormulaInput>
        </FormulaBar>

        <SheetArea>
          <Grid>
            <HeadRow>
              <Corner><svg width="9" height="8" viewBox="0 0 9 8"><path d="M9 0v8H0z" fill="#b4b4b4" /></svg></Corner>
              {COLS.map((w, i) => <ColHead key={i} $w={w}>{NAMES[i]}</ColHead>)}
            </HeadRow>
            {HEIGHTS.map((h, i) => <SheetRow key={i} n={i + 7} h={h} />)}
          </Grid>
          <VScroll>
            <ScrollBtn $w={11} $h={14}><Tri d="u" s={7} /></ScrollBtn>
            <VThumb />
            <Push />
            <ScrollBtn $w={11} $h={14}><Tri d="d" s={7} /></ScrollBtn>
          </VScroll>
          <EdgeStrip>
            <svg width="5" height="412" viewBox="0 0 5 412">
              <path d="M0 0h5v14H0z" fill="#e6e6e6" />
              <path d="M0 3l5 6M0 18l5 8" stroke="#888" />
              <path d="M0 99h5v4H0zM0 140h5v3.500H0zM0 182h5v2H0zM0 325h5v4H0z" fill="#000" />
              <path d="M1 288l4 4M0 294l4 6M3 304l2 3M1 398l4 6" stroke="#666" />
            </svg>
          </EdgeStrip>
        </SheetArea>

        <SheetTabs>
          <NavBox>
            <Tri d="l" c="#217346" s={7} />
            <ArrowGap $w={19} />
            <Tri d="r" c="#b8b8b8" s={7} />
            <NavDots>...</NavDots>
          </NavBox>
          <STab $w={57} $mr={4} $bg="#00b050" $c="#10351f"><T t="Kontur" w={36} /></STab>
          <STab $w={58} $mr={4} $bg="#00b0f0" $c="#0b3a55"><T t="Elevasi" w={37} /></STab>
          <STab $w={70} $mr={4} $bg="#002060" $c="#fff"><T t="Terjunan" w={47} /></STab>
          <STab $w={124} $mr={2} $bg="#808080" $c="#f4f4f4"><T t="Analisa Hidraulika" w={97} /></STab>
          <ActiveSheet><T t="Beff, Kolam Olak, Mercu" w={140} /></ActiveSheet>
          <STab $w={127} $mr={2} $bg="#c00000" $c="#fff"><T t="Stabilitas Bendung" w={101} /></STab>
          <TabRule />
          <STab $w={81} $mr={0}><T t="analisis++" w={55} /></STab>
          <TabRule />
          <STab $w={59} $mr={0}><T t="Sheet1" w={36} /></STab>
          <TabRule />
          <TabSlot $w={77}>
            <svg width="16" height="16" viewBox="0 0 16 16">
              <circle cx="8" cy="8" r="7" fill="none" stroke="#777" />
              <path d="M8 4.500v7M4.500 8h7" stroke="#666" strokeWidth="1.700" />
            </svg>
          </TabSlot>
          <TabSlot $w={25}>
            <svg width="3" height="12" viewBox="0 0 3 12"><path d="M.5 1h2v1.500h-2zM.5 5h2v1.500h-2zM.5 9h2v1.500h-2z" fill="#aaa" /></svg>
          </TabSlot>
          <HScroll>
            <ScrollBtn $w={14} $h={14}><Tri d="l" s={8} /></ScrollBtn>
            <HThumb />
            <ScrollBtn $w={14} $h={14}><Tri d="r" s={8} /></ScrollBtn>
          </HScroll>
        </SheetTabs>

        <Status>
          <T t="Ready" w={29} />
          <StatusIcon>
            <svg width="13" height="13" viewBox="0 0 13 13">
              <path d="M2 4.500h10.500v8H2z" fill="#fff" stroke="#777" />
              <path d="M5 1.500h7.500v3H5z" fill="#888" />
              <path d="M3.500 7h8M3.500 9.500h8" stroke="#777" strokeDasharray="2 1" />
              <circle cx="3" cy="3" r="2.600" fill="#666" />
            </svg>
          </StatusIcon>
          <ViewBtn $on $ml="auto">
            <svg width="13" height="13" viewBox="0 0 13 13"><path d="M.5.500h12v12H.5zM4.500.5v12M8.500.5v12M.5 4.500h12M.5 8.500h12" fill="none" stroke="#6a6a6a" /></svg>
          </ViewBtn>
          <ViewBtn>
            <svg width="13" height="13" viewBox="0 0 13 13"><path d="M.5.500h12v12H.5zM3 2.500h7v8H3zM4.500 4.500h4M4.500 6.500h4M4.500 8.500h4" fill="none" stroke="#777" /></svg>
          </ViewBtn>
          <ViewBtn>
            <svg width="13" height="13" viewBox="0 0 13 13"><path d="M.5.500h12v12H.5zM4.500.500v7M8.500.5v7M.5 7.500h8" fill="none" stroke="#777" /></svg>
          </ViewBtn>
          <ZoomCtl>
            <svg width="116" height="12" viewBox="0 0 116 12">
              <path d="M1 6.500h6M108 6.500h7M111.500 3v7" stroke="#555" strokeWidth="1.800" />
              <path d="M11 6.500h93M58.500 4v5" stroke="#999" />
              <path d="M50 1h3.500v10H50z" fill="#555" />
            </svg>
            <T t="86%" w={20} />
          </ZoomCtl>
        </Status>

        <Taskbar>
          <TaskList>
            <TaskItem>
              <svg width="15" height="16" viewBox="0 0 15 16"><path d="M0 2.500 6.500 1.500v6H0zM7.500 1.300 15 0v7.500H7.500zM0 8.500h6.500v6L0 13.500zM7.500 8.500H15V16l-7.500-1.300z" fill="#fff" /></svg>
            </TaskItem>
            <TaskItem>
              <svg width="16" height="17" viewBox="0 0 16 17"><circle cx="9.700" cy="6" r="5" fill="none" stroke="#eee" strokeWidth="1.300" /><path d="M6.200 9.800.8 16" stroke="#eee" strokeWidth="1.400" /></svg>
            </TaskItem>
            <TaskItem>
              <svg width="20" height="22" viewBox="0 0 20 22">
                <path d="M0 6.500 20 5v15.500L10 22 0 20.500z" fill="#f4f4f4" />
                <path d="M6 6V3q0-2 4-2.300T14 3v2.500" fill="none" stroke="#f4f4f4" strokeWidth="1.500" />
                <path d="M5 10l4-.4v3.900H5zM10 9.500l5-.5v4.500h-5zM5 14.500h4v3.700L5 17.800zM10 14.500h5v4.300l-5-.5z" fill="#111" />
              </svg>
            </TaskItem>
            <TaskItem>
              <svg width="19" height="20" viewBox="0 0 19 20">
                <path d="M.3 9C1.500 3 5.500.3 10 .3c5.500 0 8.700 4 8.700 9v2.200H6.500c.2 3 2.500 4.500 5.500 4.500 2.200 0 4-.6 5.500-1.500v4c-1.800 1-4 1.500-6.500 1.500-5.200 0-9-3-9-8C2 8.600 4 6.400 6.500 5.300 3.800 5.500 1.500 7 .3 9zm6.500-.8h6.500c0-2.400-1-3.700-3-3.700S7 6 6.800 8.200z" fill="#1e7fd6" />
              </svg>
            </TaskItem>
            <TaskItem $open>
              <svg width="20" height="19" viewBox="0 0 20 19">
                <path d="M0 2h7l1.500 2H20v13H0z" fill="#f5d472" />
                <path d="M0 6h20v11H0z" fill="#fbe59a" />
                <path d="M4 19v-7.500q0-1.500 1.500-1.500h9q1.500 0 1.500 1.500V19h-3.500v-4h-5v4z" fill="#3fa4d8" />
              </svg>
            </TaskItem>
            <TaskItem $active><PhotoIcon s={20} /></TaskItem>
            <TaskItem $open>
              <svg width="23" height="23" viewBox="0 0 23 23">
                <path d="M0 0h17l6 6v17H0z" fill="#f28a1c" />
                <path d="M17 0v6h6z" fill="#2b1a08" />
                <path d="M15.500 6.500c-5-2.500-10 .5-9.500 4.500.5 4.500 7.500 4 8.500-.5H10.500" fill="none" stroke="#fff" strokeWidth="2.500" />
                <SvgLetter x="6" y="21.500" fontSize="5.500" fill="#fde3c0">PDF</SvgLetter>
              </svg>
            </TaskItem>
            <TaskItem $open>
              <svg width="20" height="20" viewBox="0 0 20 20">
                <circle cx="10" cy="10" r="10" fill="#e3b92f" />
                <path d="M1.340 5 6 13l4-3V5h8.660A10 10 0 0 0 1.340 5z" fill="#d8453a" />
                <path d="M1.340 5A10 10 0 0 0 9.500 20l3.500-7-7-.5z" fill="#3aa757" />
                <circle cx="10" cy="10" r="4.700" fill="#fff" />
                <circle cx="10" cy="10" r="3.700" fill="#4a86e0" />
              </svg>
            </TaskItem>
            <TaskItem $open>
              <svg width="20" height="20" viewBox="0 0 20 20">
                <path d="M11 2.500h8.500v15H11z" fill="#fff" stroke="#1f7246" />
                <path d="M12 5.500h7M12 8.500h7M12 11.500h7M12 14.500h7M15.500 3v14" stroke="#1f7246" />
                <path d="M0 2 12 0v20L0 18z" fill="#1f7246" />
                <path d="M3.300 6.500 8.300 14M8.300 6.500 3.300 14" stroke="#fff" strokeWidth="1.700" />
              </svg>
            </TaskItem>
            <TaskItem $open><CamIcon s={21} /></TaskItem>
          </TaskList>
          <Tray>
            <ChevronUp c="#eee" w={12} />
            <CamIcon s={15} />
            <svg width="16" height="14" viewBox="0 0 16 14">
              <path d="M5.500 4.500h9v7h-9zM15.500 6.500v3" fill="none" stroke="#eee" strokeWidth="1.200" />
              <path d="M1 3h5v2.500q0 2-2.500 2T1 5.500zM2 1v2M5 1v2M3.500 7.500V12h2" fill="#111" stroke="#eee" />
            </svg>
            <svg width="14" height="14" viewBox="0 0 14 14">
              <path d="M1 13A12 12 0 0 1 13 2M4 13a9 9 0 0 1 9-8M7 13a6 6 0 0 1 6-5" fill="none" stroke="#ddd" strokeWidth="1.200" />
              <circle cx="11.500" cy="12" r="1.500" fill="#fff" />
            </svg>
            <svg width="16" height="14" viewBox="0 0 16 14">
              <path d="M1 5h2.500L7 2v10L3.500 9H1z" fill="none" stroke="#eee" />
              <path d="M9 5q1.500 2 0 4M11 3.500q2.500 3.500 0 7M13 2q3.500 5 0 10" fill="none" stroke="#ddd" />
            </svg>
            <svg width="16" height="16" viewBox="0 0 16 16">
              <path d="M0 0h16v12h-5l-3 3.500V12H0z" fill="#fff" />
              <path d="M3 3.500h10M3 6h10M3 8.500h7" stroke="#222" />
            </svg>
            <Clock>
              <T t="17.55" w={25} />
              <T t="29/11/2020" w={54} />
            </Clock>
          </Tray>
        </Taskbar>

        <Viewer>
          <ViewerBar>
            <PhotoIcon s={13} />
            <T t="2.jpg - Penampil Foto Picasa" w={141} />
            <ViewerControls>
              <svg width="11" height="11" viewBox="0 0 11 11"><path d="M1 5.500h9" stroke="#777" /></svg>
              <svg width="11" height="11" viewBox="0 0 11 11"><path d="M.5 1h9v9h-9z" fill="none" stroke="#222" strokeWidth="1.200" /></svg>
              <svg width="12" height="12" viewBox="0 0 12 12"><path d="M1.500 1.500l9 9M10.500 1.500l-9 9" stroke="#333" strokeWidth="1.200" /></svg>
            </ViewerControls>
          </ViewerBar>
          <Doc>
            <Rule $h={2} />
            <DocRow $h={38}>
              <DocHead><T t="efisien kontraksi pilar" w={219} /></DocHead>
              <DocValue><T t="Kp" w={29} /></DocValue>
            </DocRow>
            <Rule $h={2} />
            <DocBlock $h={120}>
              <DocRow $h={40}>
                <DocCell $col="2 / 4"><T t="untuk pilar berujung persegi dengan sudut dibulatkan" w={545} /></DocCell>
                <DocValue><T t="0.02" w={46} /></DocValue>
              </DocRow>
              <DocRow $h={40}>
                <DocCell $col="2 / 4"><T t="untuk pilar berujung bulat" w={268} /></DocCell>
                <DocValue><T t="0.01" w={46} /></DocValue>
              </DocRow>
              <DocRow $h={40}>
                <DocCell $col="2 / 4"><T t="untuk pilar berujung runcing" w={291} /></DocCell>
                <DocValue><T t="0" w={13} /></DocValue>
              </DocRow>
            </DocBlock>
            <Rule $h={3} />
            <DocBlock $h={37} />
            <Rule $h={3} />
            <DocRow $h={39}>
              <DocHead><T t="efisien kontraksi abutment" w={271} /></DocHead>
              <DocValue><T t="Ka" w={26} /></DocValue>
            </DocRow>
            <Rule $h={2} />
            <DocBlock $h={139} $pt={3}>
              <DocRow $h={46.67}>
                <DocCell $col="2"><T t="untuk pangkal persegi" w={223} /></DocCell>
                <DocCell $col="3" $up><Fit w={219}>dengan hulu pada 90<Sup>o</Sup></Fit></DocCell>
                <DocValue><T t="0.2" w={33} /></DocValue>
              </DocRow>
              <DocRow $h={46.67}>
                <DocCell $col="2"><T t="untuk pangkal bulat" w={202} /></DocCell>
                <DocCell $col="3" $up><Fit w={219}>dengan hulu pada 90<Sup>o</Sup></Fit></DocCell>
                <DocValue><T t="0.1" w={33} /></DocValue>
              </DocRow>
              <DocRow $h={46.67}>
                <DocCell $col="2"><T t="untuk pangkal bulat" w={202} /></DocCell>
                <DocCell $col="3"><Fit w={300}>dimana r &gt; 0.5 H<Sub>1</Sub> &amp; sudut 45<Sup>o</Sup></Fit></DocCell>
                <DocValue><T t="0" w={13} /></DocValue>
              </DocRow>
            </DocBlock>
            <Rule $h={3} />
          </Doc>
        </Viewer>

        <Watermark><T t="www.thundershare.net" w={196} /></Watermark>
        <ZoomBadge><T t="227%" w={39} /></ZoomBadge>
        <Pointer>
          <svg width="22" height="22" viewBox="0 0 22 22">
            <path d="M11 .8 14.500 4.500H12v5.500h5.500V7.500L21.200 11l-3.700 3.500V12H12v5.500h2.500L11 21.200 7.500 17.500H10V12H4.500v2.500L.8 11l3.700-3.500V10H10V4.500H7.500z" fill="#fff" stroke="#222" strokeWidth=".9" />
          </svg>
        </Pointer>
      </Desktop>
    </>
  );
}
